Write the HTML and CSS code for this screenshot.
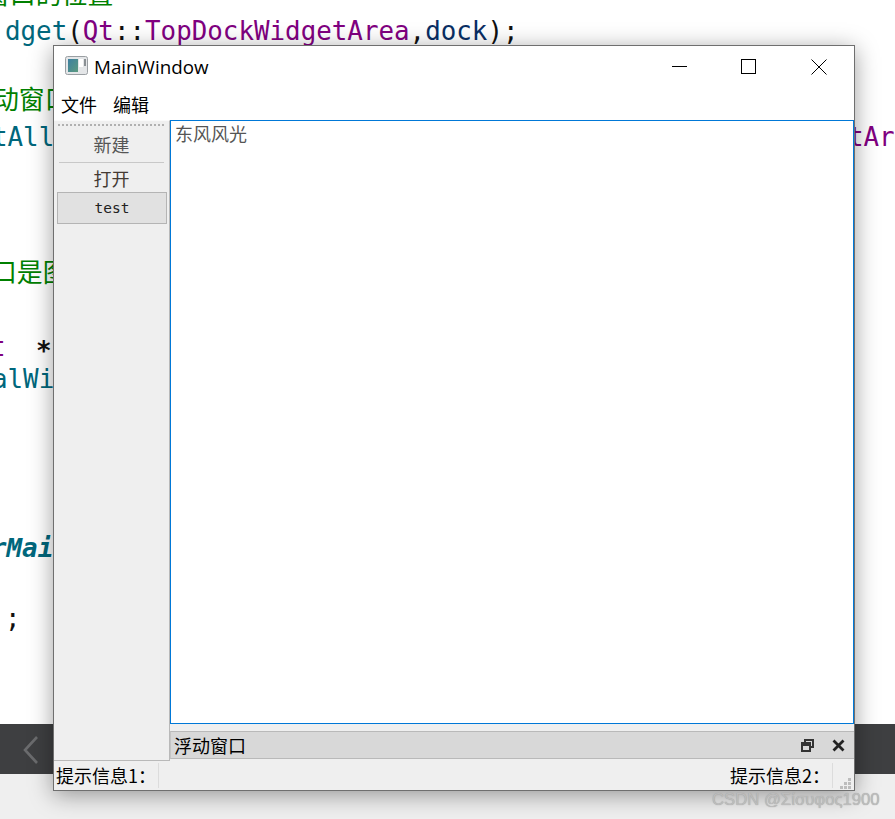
FILE: index.html
```html
<!DOCTYPE html>
<html lang="zh">
<head>
<meta charset="utf-8">
<title>MainWindow</title>
<link rel="stylesheet" href="styles.css">
</head>
<body>
<div class="desktop">
  <div class="code">
    <span class="cl c1 green">窗口的位置</span>
    <span class="cl c2"><span class="teal">dget</span>(<span class="purple">Qt</span>::<span class="purple">TopDockWidgetArea</span>,<span class="navy">dock</span>);</span>
    <span class="cl c3 green">动窗口</span>
    <span class="cl c4 teal">tAll</span>
    <span class="cl c5 purple">tAr</span>
    <span class="cl c6 green">口是图</span>
    <span class="cl c7 purple">t</span>
    <span class="cl c8">*</span>
    <span class="cl c9 teal">alWi</span>
    <span class="cl c10 teal">rMai</span>
    <span class="cl c11">;</span>
  </div>
  <div class="darkbar">
    <svg class="chev" width="16" height="28" viewBox="0 0 16 28"><path d="M14 1 2 14l12 13" fill="none" stroke="#6b6c6e" stroke-width="2.6"/></svg>
  </div>
  <div class="watermark">CSDN @Σίσυφος1900</div>

  <div class="window">
    <div class="titlebar">
      <svg class="appicon" width="24" height="20" viewBox="0 0 24 20">
        <defs><linearGradient id="g" x1="0" y1="0" x2="1" y2="1"><stop offset="0" stop-color="#3c7fa0"/><stop offset="1" stop-color="#5c9a80"/></linearGradient></defs>
        <rect x=".5" y=".5" width="22" height="18" rx="2" fill="#e4e6e8" stroke="#9a9fa3"/>
        <rect x="3" y="3" width="10" height="13" fill="url(#g)"/>
        <rect x="14" y="3" width="4" height="8" fill="#fff"/>
        <rect x="19" y="3" width="2" height="7" fill="#8a9094"/>
      </svg>
      <span class="title">MainWindow</span>
      <div class="caption">
        <svg class="capbtn cap-min" width="16" height="16" viewBox="0 0 16 16"><path d="M0 7.5h15" stroke="#000"/></svg>
        <svg class="capbtn cap-max" width="16" height="16" viewBox="0 0 16 16"><rect x=".5" y=".5" width="14" height="14" fill="none" stroke="#000"/></svg>
        <svg class="capbtn" width="16" height="16" viewBox="0 0 16 16"><path d="M.5.5l15 15M15.5.5l-15 15" stroke="#000" fill="none"/></svg>
      </div>
    </div>
    <div class="menubar"><span>文件</span><span>编辑</span></div>
    <div class="body">
      <div class="toolbar">
        <div class="grip"></div>
        <div class="tool t-new">新建</div>
        <div class="sep"></div>
        <div class="tool t-open">打开</div>
        <div class="tool t-test">test</div>
      </div>
      <div class="central">
        <div class="edit">东风风光</div>
        <div class="dock">
          <span>浮动窗口</span>
          <div class="dockbtns">
            <svg width="13" height="13" viewBox="0 0 13 13"><path d="M4 3V1h8v7h-2M1 4h8v8H1zM1 6h8" fill="none" stroke="#333" stroke-width="2"/></svg>
            <svg width="13" height="13" viewBox="0 0 13 13"><path d="M1.5 1.5l10 10M11.5 1.5l-10 10" fill="none" stroke="#222" stroke-width="2.8"/></svg>
          </div>
        </div>
      </div>
    </div>
    <div class="status">
      <span class="st-left">提示信息1：</span>
      <span class="st-right">提示信息2：</span>
      <svg class="sizegrip" width="11" height="11" viewBox="0 0 11 11" fill="#bdbdbd"><rect x="8" y="0" width="3" height="3"/><rect x="4" y="4" width="3" height="3"/><rect x="8" y="4" width="3" height="3"/><rect x="0" y="8" width="3" height="3"/><rect x="4" y="8" width="3" height="3"/><rect x="8" y="8" width="3" height="3"/></svg>
    </div>
  </div>
</div>
</body>
</html>
```
FILE: styles.css
```css
* { box-sizing: border-box; }
html, body { margin: 0; padding: 0; }
body { background: #fff; font-family: "Noto Sans CJK SC", "Noto Sans", sans-serif; }
.desktop { position: relative; width: 895px; height: 819px; overflow: hidden; background: #fff; }

.code { position: absolute; inset: 0; font-family: "DejaVu Sans Mono", "Noto Sans CJK SC", monospace; font-size: 25.85px; line-height: 34px; color: #111; white-space: pre; }
.cl { position: absolute; }
.green { color: #008000; }
.teal { color: #00677c; }
.purple { color: #800080; }
.navy { color: #092e64; }
.c1 { left: -16px; top: -22px; }
.c2 { left: 5px; top: 14px; }
.c3 { left: -7px; top: 83px; }
.c4 { left: -8px; top: 120px; }
.c5 { left: 848px; top: 120px; }
.c6 { left: -9px; top: 256px; }
.c7 { left: -10px; top: 330px; }
.c8 { left: 36px; top: 334px; font-weight: bold; }
.c9 { left: -8px; top: 362px; }
.c10 { left: -9px; top: 531px; font-weight: bold; font-style: italic; }
.c11 { left: 5px; top: 601px; }

.darkbar { position: absolute; left: 0; right: 0; top: 724px; height: 50px; background: #3e3f41; }
.chev { position: absolute; left: 23px; top: 12px; }
.desktop::after { content: ""; position: absolute; left: 0; right: 0; top: 774px; bottom: 0; background: #efefef; z-index: 0; }
.watermark { position: absolute; left: 712px; top: 789px; z-index: 2; font-family: "Liberation Sans", sans-serif; font-size: 16.7px; line-height: 22px; color: #bcbcbc; text-shadow: 0 0 1px #999; }

.window { position: absolute; left: 53px; top: 45px; width: 802px; height: 746px; z-index: 1; background: #fff; border: 1px solid #6f6f6f; display: flex; flex-direction: column; box-shadow: 0 4px 22px rgba(0,0,0,.38); color: #000; }
.titlebar { height: 39px; flex: none; display: flex; align-items: center; padding: 2px 0 0 11px; }
.appicon { margin-right: 5px; margin-top: -2px; }
.title { font-family: "Open Sans", sans-serif; font-size: 18.8px; }
.caption { margin-left: auto; display: flex; padding-right: 27px; align-items: center; }
.cap-min { margin-right: 53px; }
.cap-max { margin-right: 54px; }
.menubar { height: 35px; flex: none; display: flex; gap: 16px; padding: 2px 0 0 7px; align-items: center; font-size: 18px; }
.body { flex: 1; display: flex; min-height: 0; }
.toolbar { width: 116px; flex: none; background: #efefef; border-right: 1px solid #b9b9b9; border-bottom: 1px solid #b9b9b9; border-top: 1px solid #fafafa; display: flex; flex-direction: column; align-items: stretch; margin-bottom: -2px; position: relative; z-index: 1; }
.grip { height: 2px; margin: 3px 3px 0 4px; background: repeating-linear-gradient(90deg, #b0b0b0 0 2px, transparent 2px 4px); flex: none; }
.tool { text-align: center; font-size: 18px; color: #555; flex: none; }
.t-new { height: 36px; line-height: 36px; }
.sep { height: 1px; background: #c8c8c8; margin: 0 5px; flex: none; }
.t-open { height: 29px; line-height: 30px; color: #443a33; }
.t-test { height: 32px; margin: 0 2px 0 3px; border: 1px solid #b4b4b4; background: #e1e1e1; font-family: "DejaVu Sans Mono", monospace; font-size: 14.5px; line-height: 31px; color: #222; }
.central { flex: 1; display: flex; flex-direction: column; min-width: 0; background: #efefef; }
.edit { height: 604px; flex: none; background: #fff; border: 1px solid #0078d7; padding: 0 0 0 4px; font-size: 18px; line-height: 25px; color: #555; }
.dock { margin-top: 7px; height: 28px; flex: none; background: #d8d8d8; border-top: 1px solid #b9b9b9; border-bottom: 1px solid #b9b9b9; border-left: 1px solid #c4c4c4; padding-left: 3px; display: flex; align-items: center; font-size: 18px; }
.dockbtns { margin-left: auto; display: flex; gap: 18px; padding: 0 9px 0 0; align-items: center; }
.status { height: 31px; flex: none; background: #efefef; display: flex; align-items: center; font-size: 18px; padding-left: 2px; position: relative; }
.st-left { width: 103px; height: 25px; line-height: 25px; margin-top: 2px; border-right: 1px solid #dcdcdc; }
.st-right { margin-left: auto; height: 25px; line-height: 25px; margin-top: 2px; padding-right: 2px; margin-right: 21px; border-right: 1px solid #dcdcdc; }
.sizegrip { position: absolute; right: 3px; bottom: 1px; }
```
